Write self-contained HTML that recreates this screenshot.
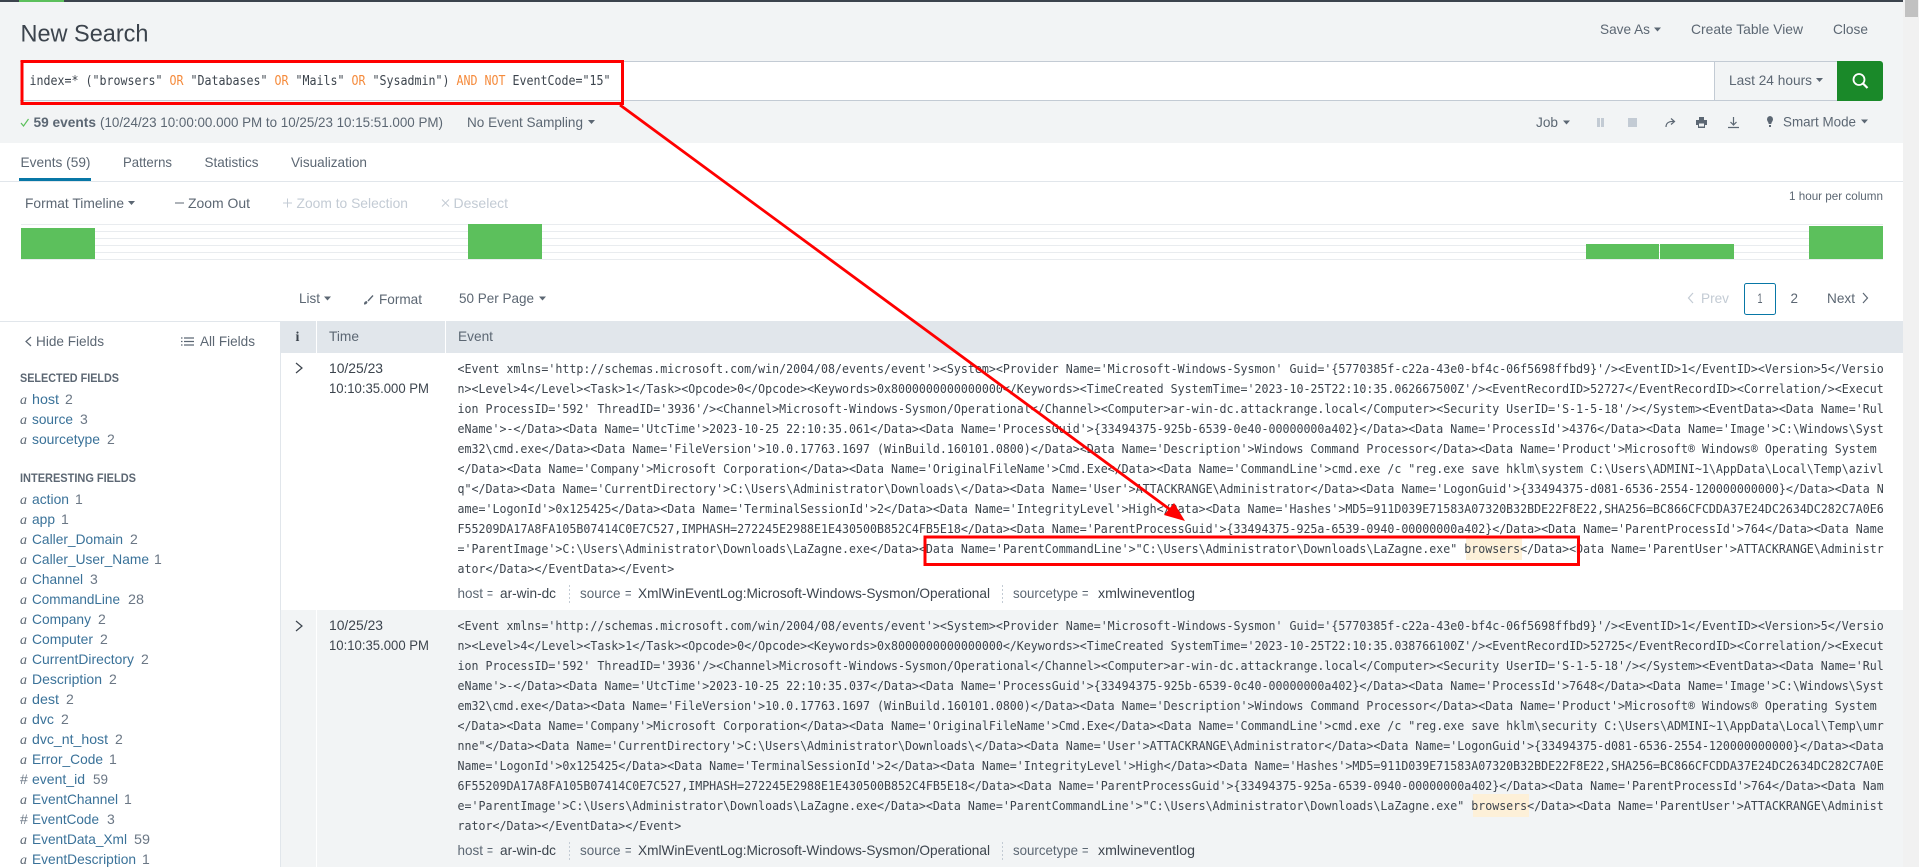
<!DOCTYPE html>
<html lang="en"><head><meta charset="utf-8"><title>New Search</title>
<style>
html,body{margin:0;padding:0;background:#fff;overflow:hidden;width:1919px;height:867px}
svg{display:block;position:absolute;left:0;top:0}
text{font-family:"Liberation Sans",sans-serif;font-size:14px;fill:#5c6773}
.m text,text.m{font-family:"DejaVu Sans Mono","Liberation Mono",monospace;font-size:12.24px;fill:#3c444d}
.d{fill:#c3cbd4}
.n{fill:#3a7299}
.c{fill:#6b7785}
.a{font-family:"Liberation Serif",serif;font-style:italic;fill:#5c6773}
.v{fill:#3c444d}
.or{fill:#f58b3c}
</style></head><body>
<svg width="1919" height="867" viewBox="0 0 1919 867" xmlns="http://www.w3.org/2000/svg">
<!-- backgrounds -->
<rect width="1919" height="867" fill="#fff"/>
<rect width="1903" height="143" fill="#f2f4f5"/>
<rect width="1903" height="2" fill="#3c444d"/>
<rect x="19" width="45" height="2" fill="#5cc05c"/>
<rect x="1903" width="16" height="867" fill="#f1f1f1"/>
<rect x="1905" y="0" width="13" height="17" fill="#c1c1c1"/>

<!-- header -->
<text x="20.5" y="41.5" style="font-size:24px;fill:#3c444d" textLength="128" lengthAdjust="spacingAndGlyphs">New Search</text>
<text x="1600" y="34" textLength="50" lengthAdjust="spacingAndGlyphs">Save As</text>
<path d="M1654 27.5h7l-3.5 4z" fill="#5c6773"/>
<text x="1691" y="34" textLength="112" lengthAdjust="spacingAndGlyphs">Create Table View</text>
<text x="1833" y="34" textLength="35" lengthAdjust="spacingAndGlyphs">Close</text>

<!-- search bar -->
<rect x="20" y="61" width="1694" height="40" fill="#fff"/>
<rect x="20" y="61" width="1694" height="1" fill="#c3cbd4"/>
<rect x="20" y="100" width="1694" height="1" fill="#c3cbd4"/>
<rect x="1714" y="61" width="123" height="40" fill="#f2f4f5"/>
<rect x="1714" y="61" width="123" height="1" fill="#c3cbd4"/>
<rect x="1714" y="100" width="123" height="1" fill="#c3cbd4"/>
<rect x="1714" y="61" width="1" height="40" fill="#c3cbd4"/>
<text x="1729" y="85" textLength="83" lengthAdjust="spacingAndGlyphs">Last 24 hours</text>
<path d="M1816 78h7l-3.500 4z" fill="#5c6773"/>
<path d="M1837 61h43a3 3 0 0 1 3 3v34a3 3 0 0 1-3 3h-43z" fill="#1a8929"/>
<circle cx="1859" cy="79.500" r="5.500" fill="none" stroke="#fff" stroke-width="1.800"/>
<path d="M1863 83.500l4.500 4.500" stroke="#fff" stroke-width="2.200" fill="none"/>
<text class="m" x="29.500" y="85" style="font-size:13.2px" textLength="581" lengthAdjust="spacingAndGlyphs">index=* ("browsers" <tspan class="or">OR</tspan> "Databases" <tspan class="or">OR</tspan> "Mails" <tspan class="or">OR</tspan> "Sysadmin") <tspan class="or">AND</tspan> <tspan class="or">NOT</tspan> EventCode="15"</text>

<!-- job status -->
<path d="M21 123l2.500 3 5-7" fill="none" stroke="#5cc05c" stroke-width="1.200"/>
<text x="33.500" y="127" style="font-weight:bold" textLength="62.500" lengthAdjust="spacingAndGlyphs">59 events</text>
<text x="100" y="127" textLength="343" lengthAdjust="spacingAndGlyphs">(10/24/23 10:00:00.000 PM to 10/25/23 10:15:51.000 PM)</text>
<text x="467" y="127" textLength="116" lengthAdjust="spacingAndGlyphs">No Event Sampling</text>
<path d="M588 120h7l-3.500 4z" fill="#5c6773"/>
<text x="1536" y="127" textLength="22" lengthAdjust="spacingAndGlyphs">Job</text>
<path d="M1563 120.500h7l-3.500 4z" fill="#5c6773"/>
<path d="M1597 118h3v9h-3zM1601 118h3v9h-3z" fill="#c3cbd4"/>
<rect x="1628" y="118" width="9" height="9" fill="#c3cbd4"/>
<path d="M1666 127c0-4 3-6 8-5.500M1671 118.500l3.500 3-3.500 3" fill="none" stroke="#5c6773" stroke-width="1.200"/>
<path d="M1699 117h5v3h3v5h-2v3h-7v-3h-2v-5h3z" fill="#5c6773"/><rect x="1699" y="123.500" width="5" height="3" fill="#f2f4f5"/>
<path d="M1733.500 117v8M1730.500 122l3 3 3-3M1728 127.500h11" fill="none" stroke="#5c6773" stroke-width="1.200"/>
<path d="M1770 116a3.200 3.200 0 0 1 3 3.500c0 1.500-1.500 2.500-1.700 4.500h-2.600c-.2-2-1.700-3-1.700-4.500a3.200 3.200 0 0 1 3-3.500zM1769 125h2v2h-2z" fill="#5c6773"/>
<text x="1783" y="126.500" textLength="73" lengthAdjust="spacingAndGlyphs">Smart Mode</text>
<path d="M1861 119.500h7l-3.500 4z" fill="#5c6773"/>

<!-- tabs -->
<text x="20.500" y="167" textLength="70" lengthAdjust="spacingAndGlyphs">Events (59)</text>
<text x="123" y="167" textLength="49" lengthAdjust="spacingAndGlyphs">Patterns</text>
<text x="204.500" y="167" textLength="54" lengthAdjust="spacingAndGlyphs">Statistics</text>
<text x="291" y="167" textLength="76" lengthAdjust="spacingAndGlyphs">Visualization</text>
<rect x="0" y="181" width="1903" height="1" fill="#e1e6eb"/>
<rect x="19" y="178" width="72" height="3" fill="#0877a6"/>

<!-- timeline toolbar -->
<text x="25" y="208" textLength="99" lengthAdjust="spacingAndGlyphs">Format Timeline</text>
<path d="M128 201h7l-3.500 4z" fill="#5c6773"/>
<path d="M175 203h9" stroke="#5c6773" stroke-width="1"/>
<text x="188" y="208" textLength="62" lengthAdjust="spacingAndGlyphs">Zoom Out</text>
<path d="M283 203h9M287.500 198.500v9" stroke="#c3cbd4" stroke-width="1"/>
<text class="d" x="296.500" y="208" textLength="111.500" lengthAdjust="spacingAndGlyphs">Zoom to Selection</text>
<path d="M442 199.500l7 7M449 199.500l-7 7" stroke="#c3cbd4" stroke-width="1"/>
<text class="d" x="453.500" y="208" textLength="54.500" lengthAdjust="spacingAndGlyphs">Deselect</text>
<text x="1789" y="200" style="font-size:12px" textLength="94" lengthAdjust="spacingAndGlyphs">1 hour per column</text>

<!-- chart -->
<g fill="#e9ecef">
<rect x="21" y="224" width="1862" height="1"/><rect x="21" y="231" width="1862" height="1"/><rect x="21" y="238" width="1862" height="1"/><rect x="21" y="245" width="1862" height="1"/><rect x="21" y="252" width="1862" height="1"/><rect x="21" y="259" width="1862" height="1"/>
</g>
<g fill="#5cc05c">
<rect x="21" y="228" width="74" height="31"/>
<rect x="468" y="224" width="74" height="35"/>
<rect x="1586" y="244" width="73" height="15"/>
<rect x="1660" y="244" width="74" height="15"/>
<rect x="1809" y="226" width="74" height="33"/>
</g>

<!-- results toolbar -->
<text x="299" y="303" textLength="21" lengthAdjust="spacingAndGlyphs">List</text>
<path d="M324 296.500h7l-3.500 4z" fill="#5c6773"/>
<path d="M364 304.500c0-2 .5-3 2.500-3.500l1 1c-.5 2-1.500 2.500-3.500 2.500zM367.500 300.500l5-5.500 1 1-5 5.500z" fill="#5c6773"/>
<text x="379" y="304" textLength="43" lengthAdjust="spacingAndGlyphs">Format</text>
<text x="459" y="303" textLength="75" lengthAdjust="spacingAndGlyphs">50 Per Page</text>
<path d="M539 296.500h7l-3.500 4z" fill="#5c6773"/>
<path d="M1693 293l-4.500 5 4.500 5" fill="none" stroke="#c3cbd4" stroke-width="1.200"/>
<text class="d" x="1701" y="303" textLength="28" lengthAdjust="spacingAndGlyphs">Prev</text>
<rect x="1744.500" y="283.500" width="31" height="31" rx="2" fill="#fff" stroke="#0877a6" stroke-width="1"/>
<text x="1757.500" y="303" textLength="5" lengthAdjust="spacingAndGlyphs">1</text>
<text x="1790.500" y="303" textLength="7.500" lengthAdjust="spacingAndGlyphs">2</text>
<text x="1827" y="303" textLength="28" lengthAdjust="spacingAndGlyphs">Next</text>
<path d="M1863 293l4.500 5-4.500 5" fill="none" stroke="#5c6773" stroke-width="1.200"/>

<!-- left panel frame -->
<rect x="0" y="321" width="281" height="1" fill="#e1e6eb"/>
<rect x="280" y="321" width="1" height="546" fill="#e1e6eb"/>

<!-- table header -->
<rect x="281" y="321" width="1622" height="32" fill="#e1e6eb"/>
<rect x="316" y="321" width="1" height="32" fill="#fff"/>
<rect x="445" y="321" width="1" height="32" fill="#fff"/>
<text x="295.500" y="341" style="font-family:'Liberation Serif',serif;font-weight:bold;fill:#3c444d">i</text>
<text x="329" y="341" textLength="30" lengthAdjust="spacingAndGlyphs">Time</text>
<text x="458" y="341" textLength="35" lengthAdjust="spacingAndGlyphs">Event</text>

<!-- row 2 bg -->
<rect x="281" y="610" width="1622" height="257" fill="#f2f4f5"/>
<rect x="316" y="610" width="1" height="257" fill="#fff"/>

<!-- highlights -->
<rect x="1466" y="537" width="56" height="23" fill="#fdf0d8"/>
<rect x="1473" y="794" width="56" height="23" fill="#fdf0d8"/>

<!-- sidebar -->
<path d="M31 337l-5 4.500 5 4.500" fill="none" stroke="#5c6773" stroke-width="1.200"/>
<text x="36" y="346" textLength="68" lengthAdjust="spacingAndGlyphs">Hide Fields</text>
<path d="M184 338h10M184 341.500h10M184 345h10M181 338h1.500M181 341.500h1.500M181 345h1.500" stroke="#5c6773" stroke-width="1.200"/>
<text x="200" y="346" textLength="55" lengthAdjust="spacingAndGlyphs">All Fields</text>
<text x="20" y="382" style="font-size:12px;font-weight:bold" textLength="99" lengthAdjust="spacingAndGlyphs">SELECTED FIELDS</text>
<text x="20" y="482" style="font-size:12px;font-weight:bold" textLength="116" lengthAdjust="spacingAndGlyphs">INTERESTING FIELDS</text>

<text class="a" x="20" y="404">a</text><text class="n" x="32" y="404" textLength="27" lengthAdjust="spacingAndGlyphs">host</text><text class="c" x="65" y="404">2</text>
<text class="a" x="20" y="424">a</text><text class="n" x="32" y="424" textLength="41" lengthAdjust="spacingAndGlyphs">source</text><text class="c" x="80" y="424">3</text>
<text class="a" x="20" y="444">a</text><text class="n" x="32" y="444" textLength="68" lengthAdjust="spacingAndGlyphs">sourcetype</text><text class="c" x="107" y="444">2</text>

<text class="a" x="20" y="504">a</text><text class="n" x="32" y="504" textLength="37" lengthAdjust="spacingAndGlyphs">action</text><text class="c" x="75" y="504">1</text>
<text class="a" x="20" y="524">a</text><text class="n" x="32" y="524" textLength="23" lengthAdjust="spacingAndGlyphs">app</text><text class="c" x="61" y="524">1</text>
<text class="a" x="20" y="544">a</text><text class="n" x="32" y="544" textLength="91" lengthAdjust="spacingAndGlyphs">Caller_Domain</text><text class="c" x="130" y="544">2</text>
<text class="a" x="20" y="564">a</text><text class="n" x="32" y="564" textLength="117" lengthAdjust="spacingAndGlyphs">Caller_User_Name</text><text class="c" x="154" y="564">1</text>
<text class="a" x="20" y="584">a</text><text class="n" x="32" y="584" textLength="51" lengthAdjust="spacingAndGlyphs">Channel</text><text class="c" x="90" y="584">3</text>
<text class="a" x="20" y="604">a</text><text class="n" x="32" y="604" textLength="88" lengthAdjust="spacingAndGlyphs">CommandLine</text><text class="c" x="128" y="604" textLength="16" lengthAdjust="spacingAndGlyphs">28</text>
<text class="a" x="20" y="624">a</text><text class="n" x="32" y="624" textLength="59" lengthAdjust="spacingAndGlyphs">Company</text><text class="c" x="98" y="624">2</text>
<text class="a" x="20" y="644">a</text><text class="n" x="32" y="644" textLength="61" lengthAdjust="spacingAndGlyphs">Computer</text><text class="c" x="100" y="644">2</text>
<text class="a" x="20" y="664">a</text><text class="n" x="32" y="664" textLength="102" lengthAdjust="spacingAndGlyphs">CurrentDirectory</text><text class="c" x="141" y="664">2</text>
<text class="a" x="20" y="684">a</text><text class="n" x="32" y="684" textLength="70" lengthAdjust="spacingAndGlyphs">Description</text><text class="c" x="109" y="684">2</text>
<text class="a" x="20" y="704">a</text><text class="n" x="32" y="704" textLength="27" lengthAdjust="spacingAndGlyphs">dest</text><text class="c" x="66" y="704">2</text>
<text class="a" x="20" y="724">a</text><text class="n" x="32" y="724" textLength="22" lengthAdjust="spacingAndGlyphs">dvc</text><text class="c" x="61" y="724">2</text>
<text class="a" x="20" y="744">a</text><text class="n" x="32" y="744" textLength="76" lengthAdjust="spacingAndGlyphs">dvc_nt_host</text><text class="c" x="115" y="744">2</text>
<text class="a" x="20" y="764">a</text><text class="n" x="32" y="764" textLength="71" lengthAdjust="spacingAndGlyphs">Error_Code</text><text class="c" x="109" y="764">1</text>
<text class="c" x="20" y="784">#</text><text class="n" x="32" y="784" textLength="53" lengthAdjust="spacingAndGlyphs">event_id</text><text class="c" x="93" y="784" textLength="15" lengthAdjust="spacingAndGlyphs">59</text>
<text class="a" x="20" y="804">a</text><text class="n" x="32" y="804" textLength="86" lengthAdjust="spacingAndGlyphs">EventChannel</text><text class="c" x="124" y="804">1</text>
<text class="c" x="20" y="824">#</text><text class="n" x="32" y="824" textLength="67" lengthAdjust="spacingAndGlyphs">EventCode</text><text class="c" x="107" y="824">3</text>
<text class="a" x="20" y="844">a</text><text class="n" x="32" y="844" textLength="95" lengthAdjust="spacingAndGlyphs">EventData_Xml</text><text class="c" x="134" y="844" textLength="16" lengthAdjust="spacingAndGlyphs">59</text>
<text class="a" x="20" y="864">a</text><text class="n" x="32" y="864" textLength="104" lengthAdjust="spacingAndGlyphs">EventDescription</text><text class="c" x="142" y="864">1</text>

<!-- row 1 -->
<path d="M296 363l6 5-6 5" fill="none" stroke="#3c444d" stroke-width="1.200"/>
<text class="v" x="329" y="373" textLength="54" lengthAdjust="spacingAndGlyphs">10/25/23</text>
<text class="v" x="329" y="393" textLength="100" lengthAdjust="spacingAndGlyphs">10:10:35.000 PM</text>
<g class="m" transform="translate(457.5 0) scale(.95 1)">
<text x="0" y="373">&lt;Event xmlns='http://schemas.microsoft.com/win/2004/08/events/event'&gt;&lt;System&gt;&lt;Provider Name='Microsoft-Windows-Sysmon' Guid='{5770385f-c22a-43e0-bf4c-06f5698ffbd9}'/&gt;&lt;EventID&gt;1&lt;/EventID&gt;&lt;Version&gt;5&lt;/Versio</text>
<text x="0" y="393">n&gt;&lt;Level&gt;4&lt;/Level&gt;&lt;Task&gt;1&lt;/Task&gt;&lt;Opcode&gt;0&lt;/Opcode&gt;&lt;Keywords&gt;0x8000000000000000&lt;/Keywords&gt;&lt;TimeCreated SystemTime='2023-10-25T22:10:35.062667500Z'/&gt;&lt;EventRecordID&gt;52727&lt;/EventRecordID&gt;&lt;Correlation/&gt;&lt;Execut</text>
<text x="0" y="413">ion ProcessID='592' ThreadID='3936'/&gt;&lt;Channel&gt;Microsoft-Windows-Sysmon/Operational&lt;/Channel&gt;&lt;Computer&gt;ar-win-dc.attackrange.local&lt;/Computer&gt;&lt;Security UserID='S-1-5-18'/&gt;&lt;/System&gt;&lt;EventData&gt;&lt;Data Name='Rul</text>
<text x="0" y="433">eName'&gt;-&lt;/Data&gt;&lt;Data Name='UtcTime'&gt;2023-10-25 22:10:35.061&lt;/Data&gt;&lt;Data Name='ProcessGuid'&gt;{33494375-925b-6539-0e40-00000000a402}&lt;/Data&gt;&lt;Data Name='ProcessId'&gt;4376&lt;/Data&gt;&lt;Data Name='Image'&gt;C:\Windows\Syst</text>
<text x="0" y="453">em32\cmd.exe&lt;/Data&gt;&lt;Data Name='FileVersion'&gt;10.0.17763.1697 (WinBuild.160101.0800)&lt;/Data&gt;&lt;Data Name='Description'&gt;Windows Command Processor&lt;/Data&gt;&lt;Data Name='Product'&gt;Microsoft® Windows® Operating System</text>
<text x="0" y="473">&lt;/Data&gt;&lt;Data Name='Company'&gt;Microsoft Corporation&lt;/Data&gt;&lt;Data Name='OriginalFileName'&gt;Cmd.Exe&lt;/Data&gt;&lt;Data Name='CommandLine'&gt;cmd.exe /c "reg.exe save hklm\system C:\Users\ADMINI~1\AppData\Local\Temp\azivl</text>
<text x="0" y="493">q"&lt;/Data&gt;&lt;Data Name='CurrentDirectory'&gt;C:\Users\Administrator\Downloads\&lt;/Data&gt;&lt;Data Name='User'&gt;ATTACKRANGE\Administrator&lt;/Data&gt;&lt;Data Name='LogonGuid'&gt;{33494375-d081-6536-2554-120000000000}&lt;/Data&gt;&lt;Data N</text>
<text x="0" y="513">ame='LogonId'&gt;0x125425&lt;/Data&gt;&lt;Data Name='TerminalSessionId'&gt;2&lt;/Data&gt;&lt;Data Name='IntegrityLevel'&gt;High&lt;/Data&gt;&lt;Data Name='Hashes'&gt;MD5=911D039E71583A07320B32BDE22F8E22,SHA256=BC866CFCDDA37E24DC2634DC282C7A0E6</text>
<text x="0" y="533">F55209DA17A8FA105B07414C0E7C527,IMPHASH=272245E2988E1E430500B852C4FB5E18&lt;/Data&gt;&lt;Data Name='ParentProcessGuid'&gt;{33494375-925a-6539-0940-00000000a402}&lt;/Data&gt;&lt;Data Name='ParentProcessId'&gt;764&lt;/Data&gt;&lt;Data Name</text>
<text x="0" y="553">='ParentImage'&gt;C:\Users\Administrator\Downloads\LaZagne.exe&lt;/Data&gt;&lt;Data Name='ParentCommandLine'&gt;"C:\Users\Administrator\Downloads\LaZagne.exe" browsers&lt;/Data&gt;&lt;Data Name='ParentUser'&gt;ATTACKRANGE\Administr</text>
<text x="0" y="573">ator&lt;/Data&gt;&lt;/EventData&gt;&lt;/Event&gt;</text>
</g>
<text x="457.500" y="598" textLength="25.500" lengthAdjust="spacingAndGlyphs">host</text><text x="487" y="598" textLength="6" lengthAdjust="spacingAndGlyphs">=</text><text class="v" x="500" y="598" textLength="56" lengthAdjust="spacingAndGlyphs">ar-win-dc</text>
<path d="M569.500 585v18" stroke="#c3cbd4" stroke-dasharray="2 2"/>
<text x="580" y="598" textLength="40.500" lengthAdjust="spacingAndGlyphs">source</text><text x="625" y="598" textLength="6.500" lengthAdjust="spacingAndGlyphs">=</text><text class="v" x="638" y="598" textLength="352" lengthAdjust="spacingAndGlyphs">XmlWinEventLog:Microsoft-Windows-Sysmon/Operational</text>
<path d="M1002.500 585v18" stroke="#c3cbd4" stroke-dasharray="2 2"/>
<text x="1013" y="598" textLength="65" lengthAdjust="spacingAndGlyphs">sourcetype</text><text x="1082" y="598" textLength="6.500" lengthAdjust="spacingAndGlyphs">=</text><text class="v" x="1098" y="598" textLength="97" lengthAdjust="spacingAndGlyphs">xmlwineventlog</text>

<!-- row 2 -->
<path d="M296 621l6 5-6 5" fill="none" stroke="#3c444d" stroke-width="1.200"/>
<text class="v" x="329" y="630" textLength="54" lengthAdjust="spacingAndGlyphs">10/25/23</text>
<text class="v" x="329" y="650" textLength="100" lengthAdjust="spacingAndGlyphs">10:10:35.000 PM</text>
<g class="m" transform="translate(457.5 0) scale(.95 1)">
<text x="0" y="630">&lt;Event xmlns='http://schemas.microsoft.com/win/2004/08/events/event'&gt;&lt;System&gt;&lt;Provider Name='Microsoft-Windows-Sysmon' Guid='{5770385f-c22a-43e0-bf4c-06f5698ffbd9}'/&gt;&lt;EventID&gt;1&lt;/EventID&gt;&lt;Version&gt;5&lt;/Versio</text>
<text x="0" y="650">n&gt;&lt;Level&gt;4&lt;/Level&gt;&lt;Task&gt;1&lt;/Task&gt;&lt;Opcode&gt;0&lt;/Opcode&gt;&lt;Keywords&gt;0x8000000000000000&lt;/Keywords&gt;&lt;TimeCreated SystemTime='2023-10-25T22:10:35.038766100Z'/&gt;&lt;EventRecordID&gt;52725&lt;/EventRecordID&gt;&lt;Correlation/&gt;&lt;Execut</text>
<text x="0" y="670">ion ProcessID='592' ThreadID='3936'/&gt;&lt;Channel&gt;Microsoft-Windows-Sysmon/Operational&lt;/Channel&gt;&lt;Computer&gt;ar-win-dc.attackrange.local&lt;/Computer&gt;&lt;Security UserID='S-1-5-18'/&gt;&lt;/System&gt;&lt;EventData&gt;&lt;Data Name='Rul</text>
<text x="0" y="690">eName'&gt;-&lt;/Data&gt;&lt;Data Name='UtcTime'&gt;2023-10-25 22:10:35.037&lt;/Data&gt;&lt;Data Name='ProcessGuid'&gt;{33494375-925b-6539-0c40-00000000a402}&lt;/Data&gt;&lt;Data Name='ProcessId'&gt;7648&lt;/Data&gt;&lt;Data Name='Image'&gt;C:\Windows\Syst</text>
<text x="0" y="710">em32\cmd.exe&lt;/Data&gt;&lt;Data Name='FileVersion'&gt;10.0.17763.1697 (WinBuild.160101.0800)&lt;/Data&gt;&lt;Data Name='Description'&gt;Windows Command Processor&lt;/Data&gt;&lt;Data Name='Product'&gt;Microsoft® Windows® Operating System</text>
<text x="0" y="730">&lt;/Data&gt;&lt;Data Name='Company'&gt;Microsoft Corporation&lt;/Data&gt;&lt;Data Name='OriginalFileName'&gt;Cmd.Exe&lt;/Data&gt;&lt;Data Name='CommandLine'&gt;cmd.exe /c "reg.exe save hklm\security C:\Users\ADMINI~1\AppData\Local\Temp\umr</text>
<text x="0" y="750">nne"&lt;/Data&gt;&lt;Data Name='CurrentDirectory'&gt;C:\Users\Administrator\Downloads\&lt;/Data&gt;&lt;Data Name='User'&gt;ATTACKRANGE\Administrator&lt;/Data&gt;&lt;Data Name='LogonGuid'&gt;{33494375-d081-6536-2554-120000000000}&lt;/Data&gt;&lt;Data</text>
<text x="0" y="770">Name='LogonId'&gt;0x125425&lt;/Data&gt;&lt;Data Name='TerminalSessionId'&gt;2&lt;/Data&gt;&lt;Data Name='IntegrityLevel'&gt;High&lt;/Data&gt;&lt;Data Name='Hashes'&gt;MD5=911D039E71583A07320B32BDE22F8E22,SHA256=BC866CFCDDA37E24DC2634DC282C7A0E</text>
<text x="0" y="790">6F55209DA17A8FA105B07414C0E7C527,IMPHASH=272245E2988E1E430500B852C4FB5E18&lt;/Data&gt;&lt;Data Name='ParentProcessGuid'&gt;{33494375-925a-6539-0940-00000000a402}&lt;/Data&gt;&lt;Data Name='ParentProcessId'&gt;764&lt;/Data&gt;&lt;Data Nam</text>
<text x="0" y="810">e='ParentImage'&gt;C:\Users\Administrator\Downloads\LaZagne.exe&lt;/Data&gt;&lt;Data Name='ParentCommandLine'&gt;"C:\Users\Administrator\Downloads\LaZagne.exe" browsers&lt;/Data&gt;&lt;Data Name='ParentUser'&gt;ATTACKRANGE\Administ</text>
<text x="0" y="830">rator&lt;/Data&gt;&lt;/EventData&gt;&lt;/Event&gt;</text>
</g>
<text x="457.500" y="855" textLength="25.500" lengthAdjust="spacingAndGlyphs">host</text><text x="487" y="855" textLength="6" lengthAdjust="spacingAndGlyphs">=</text><text class="v" x="500" y="855" textLength="56" lengthAdjust="spacingAndGlyphs">ar-win-dc</text>
<path d="M569.500 842v18" stroke="#c3cbd4" stroke-dasharray="2 2"/>
<text x="580" y="855" textLength="40.500" lengthAdjust="spacingAndGlyphs">source</text><text x="625" y="855" textLength="6.500" lengthAdjust="spacingAndGlyphs">=</text><text class="v" x="638" y="855" textLength="352" lengthAdjust="spacingAndGlyphs">XmlWinEventLog:Microsoft-Windows-Sysmon/Operational</text>
<path d="M1002.500 842v18" stroke="#c3cbd4" stroke-dasharray="2 2"/>
<text x="1013" y="855" textLength="65" lengthAdjust="spacingAndGlyphs">sourcetype</text><text x="1082" y="855" textLength="6.500" lengthAdjust="spacingAndGlyphs">=</text><text class="v" x="1098" y="855" textLength="97" lengthAdjust="spacingAndGlyphs">xmlwineventlog</text>

<!-- red annotations -->
<rect x="22" y="61.500" width="600.500" height="42" fill="none" stroke="#f00" stroke-width="3"/>
<rect x="925" y="537" width="653.500" height="27.500" fill="none" stroke="#f00" stroke-width="3"/>
<path d="M620 105L1172 511" stroke="#f00" stroke-width="2.800" fill="none"/>
<path d="M1185 521L1174 503L1164 515Z" fill="#f00"/>
</svg>
</body></html>
